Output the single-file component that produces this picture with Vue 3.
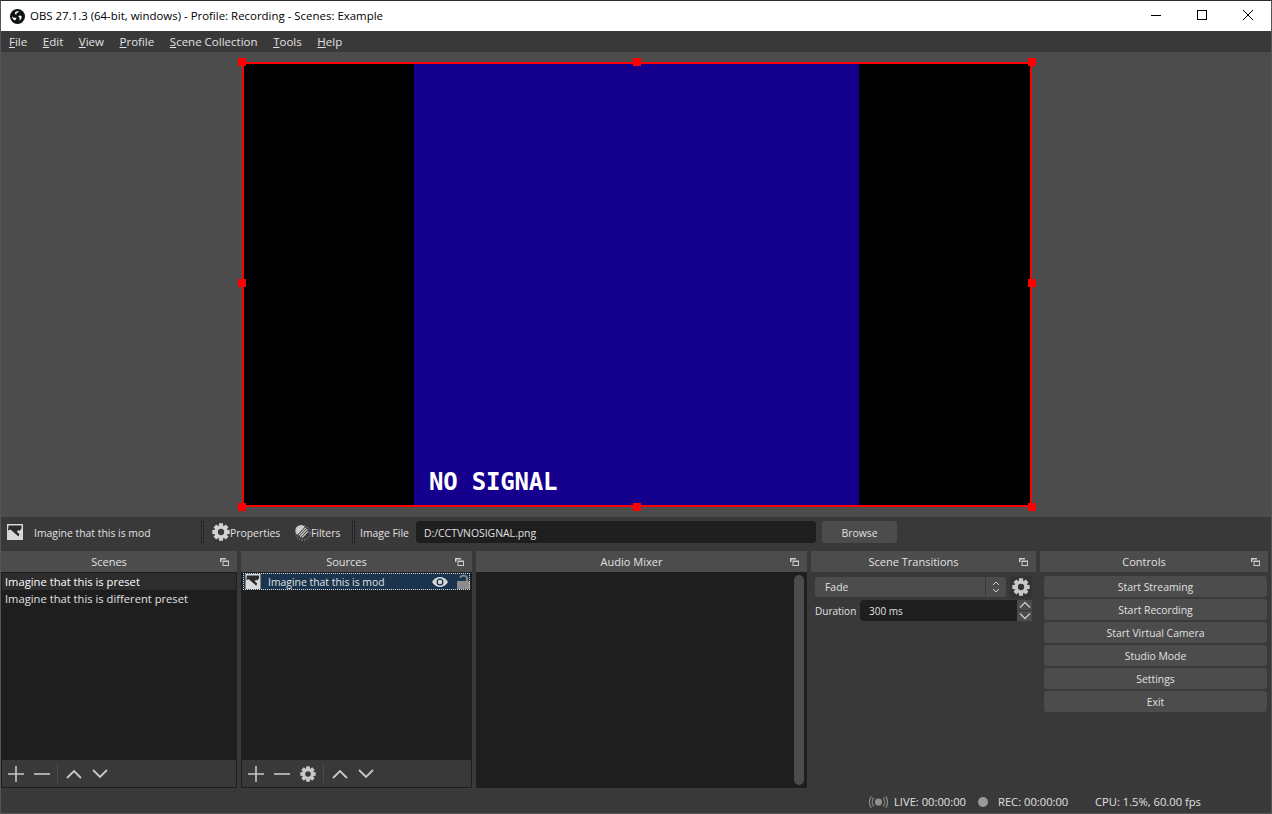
<script setup>
const menus = ["File", "Edit", "View", "Profile", "Scene Collection", "Tools", "Help"]
const controls = ["Start Streaming", "Start Recording", "Start Virtual Camera", "Studio Mode", "Settings", "Exit"]
const handles = [
  { left: "0%", top: "0%" }, { left: "50%", top: "0%" }, { left: "100%", top: "0%" },
  { left: "0%", top: "49.6%" }, { left: "100%", top: "49.6%" },
  { left: "0%", top: "100%" }, { left: "50%", top: "100%" }, { left: "100%", top: "100%" },
]

// 8 tooth gear centred on 12,12
function makeGear() {
  let d = ""
  const teeth = 8
  for (let i = 0; i < teeth; i++) {
    const a = (i / teeth) * Math.PI * 2
    const w = 0.22
    const pts = [[a - 0.36, 8.6], [a - w, 11.8], [a + w, 11.8], [a + 0.36, 8.6]]
    pts.forEach((p, j) => {
      const x = 12 + Math.cos(p[0]) * p[1]
      const y = 12 + Math.sin(p[0]) * p[1]
      d += (i === 0 && j === 0 ? "M" : "L") + x.toFixed(2) + " " + y.toFixed(2)
    })
  }
  d += "Z M12 7.800a4.200 4.200 0 1 0 0 8.400a4.200 4.200 0 1 0 0-8.400Z"
  return d
}
const gear = makeGear()
</script>

<template>
  <div class="window">
    <header class="titlebar">
      <svg class="logo" viewBox="0 0 24 24">
        <circle cx="12" cy="12" r="12" fill="#111" />
        <g fill="#fff">
          <path d="M8 5.500a6.500 6.500 0 0 1 8-.500a5 5 0 0 0-5 1.500a3.500 3.500 0 0 0-.8 2.800a3 3 0 0 1-2.200-3.800Z" />
          <path d="M18.800 12.500a6.500 6.500 0 0 1-4.300 6.200a5 5 0 0 0 .5-5a3.500 3.500 0 0 0-1.900-1.600a3 3 0 0 1 5.700.400Z" />
          <path d="M6.500 17.800a6.500 6.500 0 0 1-3-6.800a5 5 0 0 0 3.500 3a3.500 3.500 0 0 0 2.800-.6a3 3 0 0 1-3.300 4.400Z" />
        </g>
      </svg>
      <span class="title-text">OBS 27.1.3 (64-bit, windows) - Profile: Recording - Scenes: Example</span>
      <div class="win-btns">
        <svg viewBox="0 0 46 30" class="win-btn"><path d="M18 14.500h10" stroke="#000" fill="none" /></svg>
        <svg viewBox="0 0 46 30" class="win-btn"><rect x="18.500" y="9.500" width="9" height="9" stroke="#000" fill="none" /></svg>
        <svg viewBox="0 0 46 30" class="win-btn"><path d="M18 9l10 10M28 9l-10 10" stroke="#000" fill="none" /></svg>
      </div>
    </header>

    <nav class="menubar">
      <span v-for="m in menus" :key="m" class="menu"><u>{{ m[0] }}</u>{{ m.slice(1) }}</span>
    </nav>

    <section class="preview">
      <div class="canvas">
        <div class="band"><span class="nosignal">NO SIGNAL</span></div>
        <div class="handles">
          <i v-for="(h, i) in handles" :key="i" class="handle" :style="h"></i>
        </div>
      </div>
    </section>

    <section class="toolbar">
      <svg class="img-icon" viewBox="0 0 16 16">
        <rect width="16" height="16" fill="#d8d8d8" />
        <path d="M1.500 1.500h13v3l-2 2.500-1.500-1-1 2 2.500 2-1 2.500-4-3.500-4-3.500-2.500 1Z" fill="#2b2b2b" />
      </svg>
      <span class="src-name lbl">Imagine that this is mod</span>
      <i class="sep"></i>
      <span class="tool tool-props">
        <svg class="tool-gear" viewBox="0 0 24 24"><path :d="gear" fill="#d2d2d2" fill-rule="evenodd" /></svg>
        <span class="lbl">Properties</span>
      </span>
      <span class="tool tool-filters">
        <svg class="tool-filter" viewBox="0 0 18 18">
          <path d="M7 1a6 6 0 0 0-5.500 7c.3 1.500 1 2.500 2 3.500l8-8.500C10.500 1.500 9 1 7 1Z" fill="#d2d2d2" />
          <path d="M5 12l7.500-8M6.500 13.500l7.500-8M8.500 14.500l6.500-7" stroke="#d2d2d2" stroke-width="1.200" />
          <circle cx="9.500" cy="9.500" r="7.500" fill="none" stroke="#9a9a9a" stroke-width="1" stroke-dasharray="1.500 1.500" />
        </svg>
        <span class="lbl">Filters</span>
      </span>
      <i class="sep sep-2"></i>
      <span class="type-label lbl">Image File</span>
      <div class="path-input"><span class="lbl">D:/CCTVNOSIGNAL.png</span></div>
      <button class="browse"><span class="lbl">Browse</span></button>
    </section>

    <section class="docks">
      <div class="dock dock-scenes">
        <div class="dock-title">Scenes<svg class="float" viewBox="0 0 9 8"><path d="M0 0h6v1.500H1.500V4H0Z" fill="#ccc" /><path d="M2.500 2.500H9V8H2.500Z M3.500 4v3h4.500V4Z" fill="#ccc" fill-rule="evenodd" /></svg></div>
        <div class="list-frame">
          <div class="list">
            <div class="row row-hover">Imagine that this is preset</div>
            <div class="row">Imagine that this is different preset</div>
          </div>
          <div class="list-tools">
            <svg class="ic" viewBox="0 0 16 16"><path d="M8 0v16M0 8h16" stroke="#c8c8c8" stroke-width="1.600" /></svg>
            <svg class="ic" viewBox="0 0 16 16"><path d="M0 8h16" stroke="#c8c8c8" stroke-width="1.600" /></svg>
            <i class="tool-sep"></i>
            <svg class="ic" viewBox="0 0 16 16"><path d="M1 12l7-7 7 7" fill="none" stroke="#c8c8c8" stroke-width="1.800" /></svg>
            <svg class="ic" viewBox="0 0 16 16"><path d="M1 4l7 7 7-7" fill="none" stroke="#c8c8c8" stroke-width="1.800" /></svg>
          </div>
        </div>
      </div>

      <div class="dock dock-sources">
        <div class="dock-title">Sources<svg class="float" viewBox="0 0 9 8"><path d="M0 0h6v1.500H1.500V4H0Z" fill="#ccc" /><path d="M2.500 2.500H9V8H2.500Z M3.500 4v3h4.500V4Z" fill="#ccc" fill-rule="evenodd" /></svg></div>
        <div class="list-frame">
          <div class="list">
            <div class="source-row">
              <svg class="src-icon" viewBox="0 0 16 16">
                <rect width="16" height="16" fill="#d8d8d8" />
                <path d="M1.500 1.500h13v3l-2 2.500-1.500-1-1 2 2.500 2-1 2.500-4-3.500-4-3.500-2.500 1Z" fill="#2b2b2b" />
              </svg>
              <span class="source-name">Imagine that this is mod</span>
              <svg class="eye" viewBox="0 0 16 10">
                <path d="M0 5c2-3.200 5-5 8-5s6 1.800 8 5c-2 3.200-5 5-8 5s-6-1.800-8-5Z" fill="#d8d8d8" />
                <circle cx="8" cy="5" r="3.500" fill="#19344c" />
                <circle cx="8" cy="5" r="2.200" fill="#d8d8d8" />
              </svg>
              <svg class="lock" viewBox="0 0 12 14">
                <rect y="6.500" width="12" height="7.500" fill="#8c8c8c" />
                <path d="M3 3.500a3.200 2.600 0 0 1 6.200 0V7" fill="none" stroke="#8c8c8c" stroke-width="1.800" />
              </svg>
            </div>
          </div>
          <div class="list-tools">
            <svg class="ic" viewBox="0 0 16 16"><path d="M8 0v16M0 8h16" stroke="#c8c8c8" stroke-width="1.600" /></svg>
            <svg class="ic" viewBox="0 0 16 16"><path d="M0 8h16" stroke="#c8c8c8" stroke-width="1.600" /></svg>
            <svg class="ic" viewBox="0 0 24 24"><path :d="gear" fill="#c8c8c8" fill-rule="evenodd" /></svg>
            <i class="tool-sep"></i>
            <svg class="ic" viewBox="0 0 16 16"><path d="M1 12l7-7 7 7" fill="none" stroke="#c8c8c8" stroke-width="1.800" /></svg>
            <svg class="ic" viewBox="0 0 16 16"><path d="M1 4l7 7 7-7" fill="none" stroke="#c8c8c8" stroke-width="1.800" /></svg>
          </div>
        </div>
      </div>

      <div class="dock dock-mixer">
        <div class="dock-title">Audio Mixer<svg class="float" viewBox="0 0 9 8"><path d="M0 0h6v1.500H1.500V4H0Z" fill="#ccc" /><path d="M2.500 2.500H9V8H2.500Z M3.500 4v3h4.500V4Z" fill="#ccc" fill-rule="evenodd" /></svg></div>
        <div class="mixer-body"><div class="scrollbar"></div></div>
      </div>

      <div class="dock dock-trans">
        <div class="dock-title">Scene Transitions<svg class="float" viewBox="0 0 9 8"><path d="M0 0h6v1.500H1.500V4H0Z" fill="#ccc" /><path d="M2.500 2.500H9V8H2.500Z M3.500 4v3h4.500V4Z" fill="#ccc" fill-rule="evenodd" /></svg></div>
        <div class="trans-body">
          <div class="trans-row">
            <div class="combo">
              <span class="combo-text">Fade</span>
              <span class="combo-arrows">
                <svg viewBox="0 0 8 14" width="8" height="14"><path d="M1 5l3-3 3 3M1 9l3 3 3-3" fill="none" stroke="#c8c8c8" /></svg>
              </span>
            </div>
            <div class="gear-btn">
              <svg viewBox="0 0 24 24" width="18" height="18"><path :d="gear" fill="#c8c8c8" fill-rule="evenodd" /></svg>
            </div>
          </div>
          <div class="trans-row duration">
            <span class="dur-label">Duration</span>
            <div class="spin">
              <span class="spin-text">300 ms</span>
              <span class="spin-btns">
                <span class="spin-btn"><svg viewBox="0 0 12 8" width="12" height="8"><path d="M1 6.500l5-5 5 5" fill="none" stroke="#c8c8c8" stroke-width="1.400" /></svg></span>
                <span class="spin-btn"><svg viewBox="0 0 12 8" width="12" height="8"><path d="M1 1.500l5 5 5-5" fill="none" stroke="#c8c8c8" stroke-width="1.400" /></svg></span>
              </span>
            </div>
          </div>
        </div>
      </div>

      <div class="dock dock-controls">
        <div class="dock-title">Controls<svg class="float" viewBox="0 0 9 8"><path d="M0 0h6v1.500H1.500V4H0Z" fill="#ccc" /><path d="M2.500 2.500H9V8H2.500Z M3.500 4v3h4.500V4Z" fill="#ccc" fill-rule="evenodd" /></svg></div>
        <div class="controls-body">
          <button v-for="c in controls" :key="c" class="ctl">{{ c }}</button>
        </div>
      </div>
    </section>

    <footer class="status">
      <svg class="live-ic" viewBox="0 0 20 14">
        <circle cx="10" cy="7" r="3.800" fill="#8f8f8f" />
        <path d="M5 2.500a7 7 0 0 0 0 9M2.500 1a9.500 9.500 0 0 0 0 12M15 2.500a7 7 0 0 1 0 9M17.500 1a9.500 9.500 0 0 1 0 12" fill="none" stroke="#8f8f8f" stroke-width="1.200" />
      </svg>
      <span class="live">LIVE: 00:00:00</span>
      <i class="rec-dot"></i>
      <span class="rec">REC: 00:00:00</span>
      <span class="cpu">CPU: 1.5%, 60.00 fps</span>
    </footer>
  </div>
</template>

<style>
html, body { margin: 0; background: #3a393a; overflow: hidden; }
</style>

<style scoped>
.window {
  width: 1272px;
  height: 814px;
  box-sizing: border-box;
  display: flex;
  flex-direction: column;
  background: #3a393a;
  color: #e1e0e1;
  font-family: "Open Sans", "Noto Sans", sans-serif;
  font-size: 10.4px;
  border-top: 1px solid #2b2b2b;
  border-left: 1px solid #555;
  border-right: 1px solid #555;
  border-bottom: 1px solid #555;
}
.titlebar {
  height: 30px;
  flex: none;
  background: #fff;
  color: #000;
  display: flex;
  align-items: center;
  padding-left: 9px;
  font-size: 11.45px;
}
.logo { width: 15px; height: 15px; margin-right: 5px; }
.title-text { margin-bottom: 2px; }
.win-btns { margin-left: auto; display: flex; }
.win-btn { width: 46px; height: 30px; display: block; }
.menubar {
  height: 21px;
  flex: none;
  display: flex;
  align-items: center;
  padding-left: 8px;
  gap: 15.6px;
  font-size: 11.5px;
}
.preview {
  height: 465px;
  flex: none;
  background: #4c4c4c;
  display: flex;
  align-items: center;
  justify-content: center;
  padding-left: 2px;
  box-sizing: border-box;
}
.canvas {
  position: relative;
  width: 786px;
  height: 441px;
  background: #000;
  border: 2px solid #f00;
  box-sizing: content-box;
  display: flex;
}
.band {
  width: 445px;
  margin-left: 170px;
  background: #14008c;
  display: flex;
  align-items: flex-end;
  padding-left: 15px;
  box-sizing: border-box;
}
.nosignal {
  font-family: "DejaVu Sans Mono", monospace;
  font-weight: 700;
  font-size: 24px;
  line-height: 24px;
  letter-spacing: -0.2px;
  color: #fff;
  margin-bottom: 11px;
}
.handles { position: absolute; inset: -2px; }
.handle {
  position: absolute;
  width: 8px;
  height: 8px;
  margin: -4px 0 0 -4px;
  background: #f00;
}
.toolbar {
  height: 34px;
  flex: none;
  display: flex;
  align-items: center;
  padding: 0 0 4px 6px;
  box-sizing: border-box;
}
.lbl { position: relative; top: 1px; }
.img-icon { width: 16px; height: 16px; flex: none; }
.src-name { margin-left: 11px; width: 167px; flex: none; }
.sep {
  width: 1px;
  height: 20px;
  border: 1px solid #222;
  background: #444;
  flex: none;
}
.tool { display: flex; align-items: center; }
.tool-props { margin-left: 8px; width: 68px; }
.tool-gear { width: 18px; height: 18px; flex: none; }
.tool-filters { margin-left: 14px; width: 47px; }
.tool-filter { width: 17px; height: 17px; flex: none; }
.sep-2 { margin-left: 11px; }
.type-label { margin-left: 5px; width: 56px; flex: none; }
.path-input {
  width: 400px;
  height: 22px;
  flex: none;
  background: #1f1e1f;
  border-radius: 4px;
  display: flex;
  align-items: center;
  padding-left: 8px;
  box-sizing: border-box;
}
.browse, .ctl {
  font: inherit;
  color: inherit;
  background: #4c4c4c;
  border: 0;
  border-radius: 3px;
  padding: 0;
}
.browse { width: 75px; height: 22px; margin-left: 6px; }
.docks {
  height: 237px;
  flex: none;
  display: flex;
  gap: 4px;
  box-sizing: border-box;
}
.dock { display: flex; flex-direction: column; flex: none; }
.dock-scenes { width: 236px; }
.dock-sources { width: 231px; }
.dock-mixer { width: 331px; }
.dock-trans { width: 225px; }
.dock-controls { width: 228px; }
.dock-title {
  height: 21px;
  flex: none;
  background: #4c4c4c;
  position: relative;
  display: flex;
  align-items: center;
  justify-content: center;
  font-size: 11px;
  padding-right: 20px;
  box-sizing: border-box;
}
.float { position: absolute; right: 8px; top: 7px; width: 9px; height: 8px; }
.list-frame {
  flex: 1;
  display: flex;
  flex-direction: column;
  background: #1f1e1f;
  border: 1px solid #1f1e1f;
  box-sizing: border-box;
  min-height: 0;
}
.list { flex: 1; }
.row { height: 17px; line-height: 17px; padding-left: 3px; font-size: 11.2px; }
.row-hover { background: #2e2d2e; color: #fff; }
.source-row {
  height: 17px;
  margin: 0 1px;
  background: #19344c;
  outline: 1px dotted #ddd;
  outline-offset: -1px;
  display: flex;
  align-items: center;
}
.src-icon { width: 16px; height: 15px; margin-left: 2px; flex: none; }
.source-name { margin-left: 7px; }
.eye { width: 16px; height: 10px; margin-left: auto; }
.lock { width: 13px; height: 15px; margin: 0 0 0 9px; }
.list-tools {
  height: 27px;
  flex: none;
  background: #3a393a;
  display: flex;
  align-items: center;
  padding-left: 6px;
  gap: 10px;
}
.ic { width: 16px; height: 16px; flex: none; }
.tool-sep { width: 1px; height: 19px; background: #4c4c4c; margin: 0 -2px 0 -3px; }
.mixer-body {
  flex: 1;
  background: #1f1e1f;
  display: flex;
  justify-content: flex-end;
  padding: 3px 3px 3px 0;
}
.scrollbar { width: 10px; background: #4c4c4c; border-radius: 5px; }
.trans-body { padding: 4px; display: flex; flex-direction: column; gap: 2px; }
.trans-row { display: flex; align-items: center; }
.combo {
  width: 191px;
  height: 20px;
  background: #4c4c4c;
  border-radius: 3px;
  display: flex;
  align-items: center;
}
.combo-text { padding-left: 10px; flex: 1; }
.combo-arrows {
  width: 20px;
  height: 20px;
  display: flex;
  align-items: center;
  justify-content: center;
  border-left: 1px solid #3a393a;
}
.gear-btn {
  width: 22px;
  height: 22px;
  margin-left: 4px;
  background: #333;
  border-radius: 3px;
  display: flex;
  align-items: center;
  justify-content: center;
}
.dur-label { width: 45px; flex: none; font-size: 10px; }
.spin { display: flex; height: 21px; }
.spin-text {
  width: 157px;
  background: #1f1e1f;
  border-radius: 4px 0 0 4px;
  padding-left: 9px;
  box-sizing: border-box;
  display: flex;
  align-items: center;
  font-size: 10px;
}
.spin-btns { width: 15px; display: flex; flex-direction: column; gap: 1px; }
.spin-btn {
  flex: 1;
  background: #4c4c4c;
  display: flex;
  align-items: center;
  justify-content: center;
}
.controls-body {
  padding: 4px 0 0 4px;
  display: flex;
  flex-direction: column;
  gap: 2px;
}
.ctl { height: 21px; width: 223px; }
.status {
  flex: 1;
  display: flex;
  align-items: center;
  padding-top: 2px;
  box-sizing: border-box;
  font-size: 11.2px;
}
.live-ic { width: 19px; height: 14px; margin-left: 868px; }
.live { margin-left: 6px; width: 72px; }
.rec-dot { width: 10px; height: 10px; border-radius: 50%; background: #9a9a9a; margin-left: 12px; }
.rec { margin-left: 10px; width: 72px; }
.cpu { margin-left: 25px; }
</style>
